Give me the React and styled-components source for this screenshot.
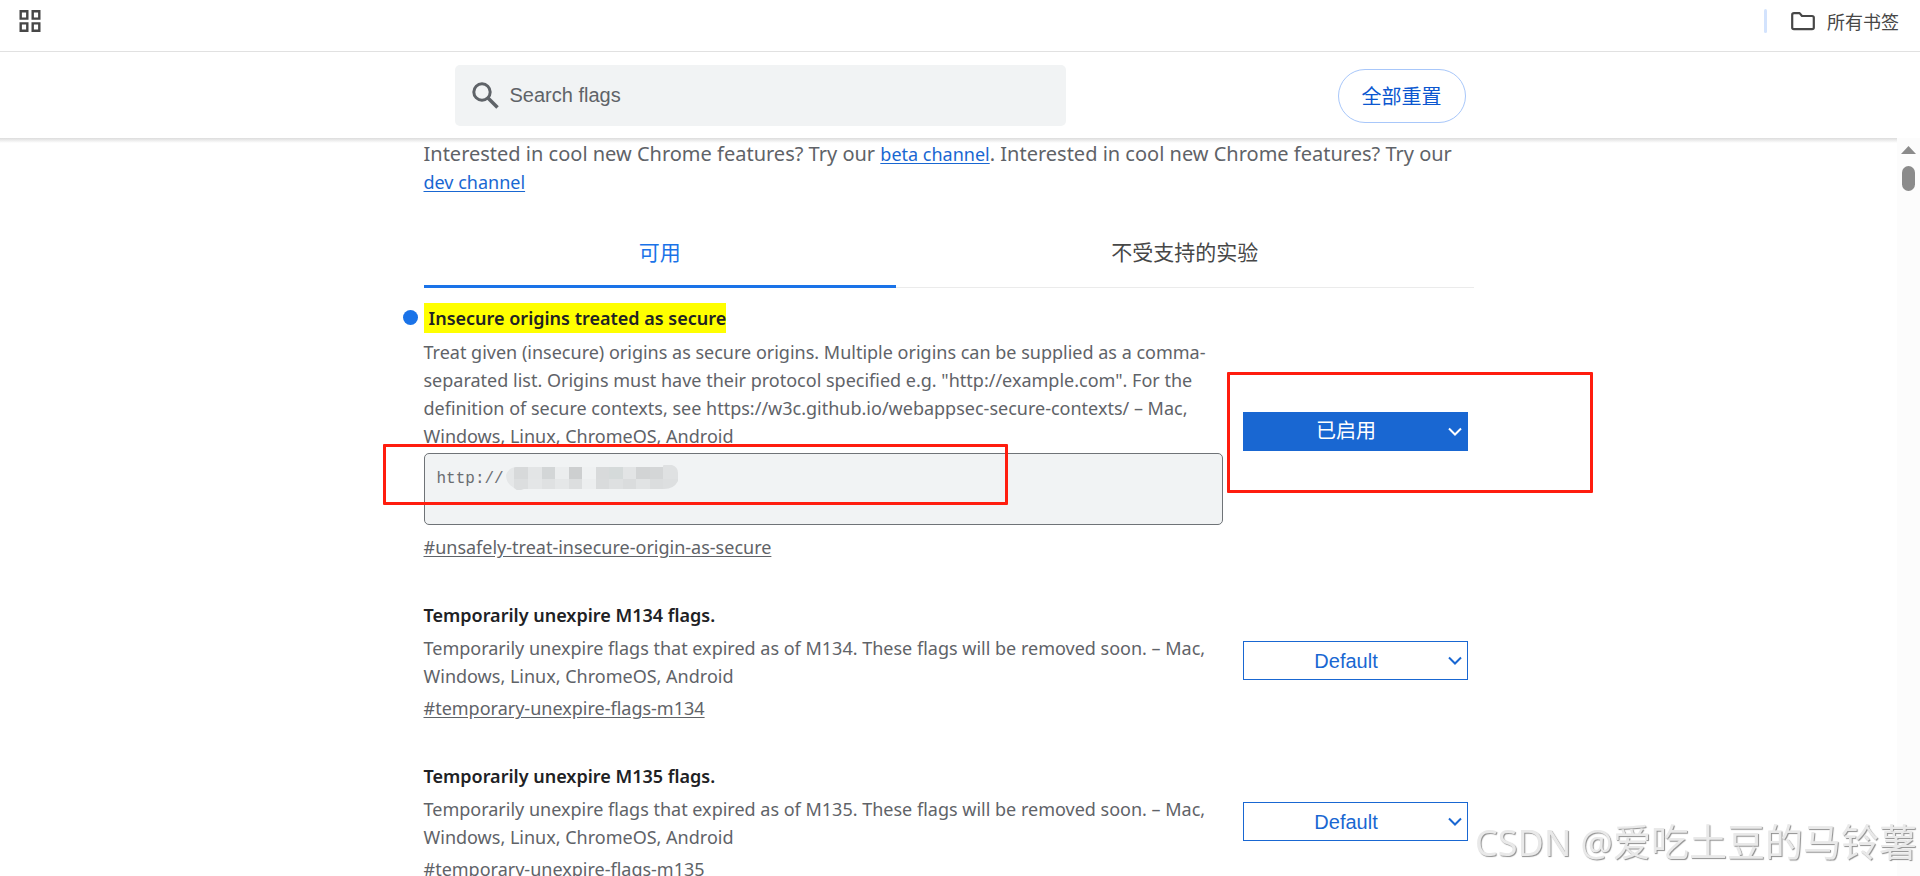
import React from "react";
import styled, { createGlobalStyle } from "styled-components";

const GlobalStyle = createGlobalStyle`
  * { box-sizing: border-box; }
  body {
    margin: 0;
    background: #fff;
    color: #5f6368;
    font-family: "Noto Sans", "Noto Sans CJK SC", sans-serif;
    font-size: 18px;
    line-height: 28px;
  }
`;

const Page = styled.div`
  height: 100vh;
  display: flex;
  flex-direction: column;
  overflow: hidden;
`;

const BookmarkBar = styled.nav`
  flex: none;
  height: 52px;
  padding: 0 21px 10px 18px;
  border-bottom: 1px solid #e1e1e1;
  display: flex;
  align-items: center;
  justify-content: space-between;
`;

const BarButton = styled.button`
  display: flex;
  align-items: center;
  gap: 12px;
  padding: 0;
  border: 0;
  background: none;
  color: #474747;
  font: 400 18px/24px "Noto Sans CJK SC", sans-serif;
`;

const BookmarkGroup = styled.div`
  display: flex;
  align-items: center;
  gap: 24px;
`;

const Divider = styled.span`
  width: 3px;
  height: 24px;
  border-radius: 2px;
  background: #d3e3fd;
`;

const Header = styled.header`
  flex: none;
  padding: 13px 23px 12px 0;
`;

const HeaderInner = styled.div`
  max-width: 1050px;
  margin: 0 auto;
  padding: 0 8px 0 31px;
  display: flex;
  align-items: center;
  justify-content: space-between;
`;

const SearchBox = styled.label`
  flex: 0 1 611px;
  height: 61px;
  padding: 0 16px;
  border-radius: 5px;
  background: #f1f3f4;
  display: flex;
  align-items: center;
  gap: 10px;
`;

const SearchInput = styled.input`
  flex: 1;
  min-width: 0;
  padding: 0 0 2px;
  border: 0;
  outline: 0;
  background: none;
  color: #5f6368;
  font: 20px/28px "Liberation Sans", sans-serif;
  &::placeholder { color: #5f6368; opacity: 1; }
`;

const ResetButton = styled.button`
  height: 54px;
  padding: 0 23px;
  border: 1px solid #a8c7fa;
  border-radius: 27px;
  background: #fff;
  color: #0b57d0;
  font: 400 20px/28px "Noto Sans CJK SC", sans-serif;
`;

const Body = styled.div`
  flex: 1;
  min-height: 0;
  display: flex;
`;

const ScrollArea = styled.main`
  flex: 1;
  min-width: 0;
  overflow: hidden;
  padding-top: 2px;
  background: linear-gradient(#dcdcdc, #fff) 0 0 / 100% 5px no-repeat;
`;

const ScrollTrack = styled.div`
  flex: none;
  width: 23px;
  padding-top: 8px;
  background: #fcfcfc;
  display: flex;
  flex-direction: column;
  align-items: center;
  gap: 12px;
`;

const ScrollThumb = styled.div`
  width: 13px;
  height: 25px;
  border-radius: 7px;
  background: #8b8b8b;
`;

const Column = styled.div`
  max-width: 1050px;
  margin: 0 auto;
`;

const Intro = styled.p`
  margin: 0;
  font-size: 20px;
`;

const IntroLink = styled.a`
  color: #1967d2;
  font-size: 18px;
  text-underline-offset: 2px;
`;

const Tabs = styled.div`
  display: flex;
  margin: 8px 0 15px;
  border-bottom: 1px solid #ebebeb;
`;

const Tab = styled.button`
  flex: 1 1 auto;
  height: 84px;
  margin-bottom: -1px;
  padding: 20px 0 11px;
  border: 0;
  background: ${(p) =>
    p.$active ? "linear-gradient(#1a73e8, #1a73e8) 0 100% / 100% 3px no-repeat" : "none"};
  border-radius: 3px 3px 0 0;
  color: ${(p) => (p.$active ? "#1a73e8" : "#474747")};
  font: 400 21px/28px "Noto Sans CJK SC", sans-serif;
`;

const Flag = styled.section`
  display: grid;
  grid-template-columns: minmax(0, 799px) 225px;
  column-gap: 20px;
  align-items: center;
  margin-bottom: 40px;
`;

const FlagTitle = styled.h2`
  position: relative;
  width: fit-content;
  margin: 0 0 5px;
  padding: ${(p) => (p.$marked ? "1px 0 1px 5px" : "0")};
  background: ${(p) => (p.$marked ? "#ff0" : "none")};
  color: #202124;
  font-size: 18px;
  font-weight: 600;
  line-height: 28px;
`;

const ModifiedDot = styled.span`
  position: absolute;
  left: -21px;
  top: 7px;
  width: 15px;
  height: 15px;
  border-radius: 50%;
  background: #1a73e8;
`;

const Description = styled.p`
  margin: 0;
`;

const Permalink = styled.a`
  display: block;
  width: fit-content;
  margin-top: 4px;
  color: #5f6368;
  text-underline-offset: 2px;
`;

const OriginField = styled.div`
  position: relative;
  margin: 3px 0 8px;
`;

const OriginInput = styled.textarea`
  display: block;
  width: 100%;
  height: 72px;
  padding: 11px 12px;
  border: 1px solid #6f7377;
  border-radius: 5px;
  outline: 0;
  resize: none;
  background: #f1f3f4;
  color: #6a6d71;
  font: 16px/28px "Liberation Mono", monospace;
`;

const Mosaic = styled.svg`
  position: absolute;
  left: 82px;
  top: 12px;
`;

const Control = styled.div`
  position: relative;
  display: flex;
  margin-bottom: 2px;
`;

const FlagSelect = styled.select`
  appearance: none;
  width: 100%;
  height: 39px;
  padding: 0 20px 0 2px;
  border: 1px solid #1967d2;
  border-radius: 0;
  outline: 0;
  background: ${(p) => (p.$enabled ? "#1967d2" : "#fff")};
  color: ${(p) => (p.$enabled ? "#fff" : "#1967d2")};
  font: 400 20px/28px "Liberation Sans", "Noto Sans CJK SC", sans-serif;
  text-align-last: center;
`;

const Chevron = styled.svg`
  position: absolute;
  right: 6px;
  top: 15px;
  fill: none;
  stroke: ${(p) => (p.$enabled ? "#fff" : "#1967d2")};
  stroke-width: 2;
  pointer-events: none;
`;

const Callout = styled.div`
  position: absolute;
  z-index: 1;
  left: ${(p) => p.$left}px;
  top: ${(p) => p.$top}px;
  width: ${(p) => p.$width}px;
  height: ${(p) => p.$height}px;
  border: 3px solid #ff1d0e;
  border-radius: 1px;
  pointer-events: none;
`;

const Watermark = styled.div`
  position: fixed;
  right: 3px;
  bottom: 9px;
  color: #e9e9e9;
  font: 400 38px/48px "Noto Sans CJK SC", sans-serif;
  text-shadow: 1px 1px 1px #8f8f8f;
  white-space: nowrap;
`;

const LatinMark = styled.span`
  font-family: "Noto Sans", sans-serif;
  font-size: 36px;
`;

const tiles = [
  [8, 2, 14, 12, "#d7d9da"], [22, 2, 14, 12, "#e3e5e6"], [36, 2, 13, 12, "#d3d6d7"],
  [49, 2, 14, 12, "#ebedee"], [63, 2, 13, 12, "#cdcfd0"], [76, 2, 14, 12, "#eff1f2"],
  [90, 2, 13, 12, "#d8dadb"], [103, 2, 14, 12, "#d5dada"], [117, 2, 13, 12, "#e2e4e5"],
  [130, 2, 14, 12, "#d2d4d5"], [144, 2, 13, 12, "#d4d6d7"], [157, 0, 15, 14, "#dfe1e2"],
  [0, 2, 8, 22, "#e5e7e8"], [8, 14, 14, 11, "#dcdedf"], [22, 14, 14, 10, "#e4e6e7"],
  [36, 14, 13, 10, "#dfe1e2"], [49, 14, 14, 10, "#e5e7e8"], [63, 14, 13, 10, "#dcdedf"],
  [76, 14, 14, 10, "#eceeef"], [90, 14, 13, 10, "#d9dbdc"], [103, 14, 14, 10, "#dee0e1"],
  [117, 14, 13, 10, "#dadcdd"], [130, 14, 14, 10, "#e1e3e4"], [144, 14, 13, 10, "#dbddde"],
  [157, 14, 15, 10, "#dddfe0"],
];

function RedactedText() {
  return (
    <Mosaic width="172" height="26" viewBox="0 0 172 26" aria-hidden="true">
      <clipPath id="redacted">
        <path d="M10 2H154L158 0H166Q172 2 172 8V16Q168 24 158 24H18L12 26L4 20Q0 16 0 10Q2 3 10 2Z" />
      </clipPath>
      <g clipPath="url(#redacted)">
        {tiles.map(([x, y, w, h, fill]) => (
          <rect key={`${x}-${y}`} x={x} y={y} width={w} height={h} fill={fill} />
        ))}
      </g>
    </Mosaic>
  );
}

function FlagControl({ id, options, enabled, children }) {
  return (
    <Control>
      <FlagSelect aria-labelledby={id} $enabled={enabled}>
        {options.map((o) => (
          <option key={o}>{o}</option>
        ))}
      </FlagSelect>
      <Chevron $enabled={enabled} width="14" height="10" viewBox="0 0 14 10" aria-hidden="true">
        <path d="M1 1.5L7 7.5L13 1.5" />
      </Chevron>
      {children}
    </Control>
  );
}

function ExpiredFlag({ milestone }) {
  const id = `unexpire-${milestone}`;
  const anchor = `#temporary-unexpire-flags-${milestone.toLowerCase()}`;
  return (
    <Flag>
      <div>
        <FlagTitle id={id}>{`Temporarily unexpire ${milestone} flags.`}</FlagTitle>
        <Description>
          {`Temporarily unexpire flags that expired as of ${milestone}. These flags will be removed soon. – Mac, Windows, Linux, ChromeOS, Android`}
        </Description>
        <Permalink href={anchor}>{anchor}</Permalink>
      </div>
      <FlagControl id={id} options={["Default", "Enabled", "Disabled"]} />
    </Flag>
  );
}

export default function App() {
  return (
    <Page>
      <GlobalStyle />
      <BookmarkBar>
        <BarButton aria-label="Apps">
          <svg width="24" height="24" viewBox="0 0 24 24" fill="none" stroke="#474747" strokeWidth="2.4">
            <path d="M2.7 2.2h6.6v7.4H2.7zM14.7 2.2h6.6v7.4h-6.6zM2.7 14.4h6.6v7.4H2.7zM14.7 14.4h6.6v7.4h-6.6z" />
          </svg>
        </BarButton>
        <BookmarkGroup>
          <Divider />
          <BarButton>
            <svg width="24" height="20" viewBox="0 0 24 20" fill="none" stroke="#474747" strokeWidth="2.2" strokeLinejoin="round">
              <path d="M3 2.1H8.6L11 5H21Q22.8 5 22.8 6.6V16.6Q22.8 18.2 21 18.2H3Q1.2 18.2 1.2 16.6V3.7Q1.2 2.1 3 2.1Z" />
            </svg>
            所有书签
          </BarButton>
        </BookmarkGroup>
      </BookmarkBar>

      <Header>
        <HeaderInner>
          <SearchBox>
            <svg width="29" height="29" viewBox="0 0 29 29" fill="none" stroke="#5f6368" aria-hidden="true">
              <circle cx="11" cy="11" r="8.2" strokeWidth="3" />
              <path d="M17 17L26.5 26.5" strokeWidth="3.6" />
            </svg>
            <SearchInput type="text" placeholder="Search flags" aria-label="Search flags" />
          </SearchBox>
          <ResetButton>全部重置</ResetButton>
        </HeaderInner>
      </Header>

      <Body>
        <ScrollArea>
          <Column>
            <Intro>
              Interested in cool new Chrome features? Try our{" "}
              <IntroLink href="#beta">beta channel</IntroLink>. Interested in cool new Chrome
              features? Try our <IntroLink href="#dev">dev channel</IntroLink>
            </Intro>

            <Tabs role="tablist">
              <Tab role="tab" aria-selected="true" $active>可用</Tab>
              <Tab role="tab" aria-selected="false">不受支持的实验</Tab>
            </Tabs>

            <Flag>
              <div>
                <FlagTitle id="insecure-origins" $marked>
                  <ModifiedDot />
                  Insecure origins treated as secure
                </FlagTitle>
                <Description>
                  Treat given (insecure) origins as secure origins. Multiple origins can be supplied
                  as a comma-separated list. Origins must have their protocol specified e.g.
                  "http://example.com". For the definition of secure contexts, see
                  https://w3c.github.io/webappsec-secure-contexts/ – Mac, Windows, Linux, ChromeOS,
                  Android
                </Description>
                <OriginField>
                  <OriginInput aria-labelledby="insecure-origins" defaultValue="http://" />
                  <RedactedText />
                  <Callout $left={-41} $top={-9} $width={625} $height={61} />
                </OriginField>
                <Permalink href="#unsafely-treat-insecure-origin-as-secure">
                  #unsafely-treat-insecure-origin-as-secure
                </Permalink>
              </div>
              <FlagControl id="insecure-origins" options={["已启用", "已停用"]} enabled>
                <Callout $left={-16} $top={-40} $width={366} $height={121} />
              </FlagControl>
            </Flag>

            <ExpiredFlag milestone="M134" />
            <ExpiredFlag milestone="M135" />
          </Column>
        </ScrollArea>
        <ScrollTrack>
          <svg width="15" height="8" viewBox="0 0 15 8" fill="#8b8b8b" aria-hidden="true">
            <path d="M7.5 0L15 8H0Z" />
          </svg>
          <ScrollThumb />
        </ScrollTrack>
      </Body>

      <Watermark><LatinMark>CSDN @</LatinMark>爱吃土豆的马铃薯</Watermark>
    </Page>
  );
}
